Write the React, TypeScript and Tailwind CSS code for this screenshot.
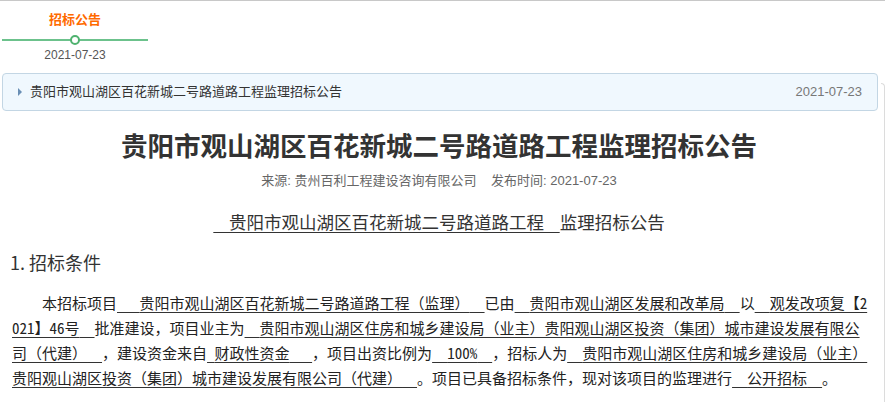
import type { ReactNode } from 'react';

const sp = (n: number) => '\u00a0'.repeat(n);

function U({ children }: { children: ReactNode }) {
  return <span className="underline decoration-[#333] underline-offset-[3px]">{children}</span>;
}

export default function App() {
  return (
    <div className="w-[885px] h-[402px] overflow-hidden bg-white border-t border-[#c8c8c8] font-['Liberation_Sans','Noto_Sans_CJK_SC',sans-serif] text-[#333]">
      {/* timeline */}
      <div className="w-[146px] ml-[2px] flex flex-col items-center">
        <div className="mt-[10px] text-[13px] font-bold leading-[18px] text-[#ff6a00]">招标公告</div>
        <div className="relative w-full h-[10px] mt-[6px] flex items-center">
          <div className="w-full h-[2px] bg-[#6cc28c]" />
          <div className="absolute left-[68px] top-0 w-[10px] h-[10px] rounded-full border-2 border-[#4fb26f] bg-white" />
        </div>
        <div className="mt-[2px] text-[12px] leading-[16px] text-[#555]">2021-07-23</div>
      </div>

      <div className="flex">
        <div className="w-[878px] flex flex-col">
          {/* list item */}
          <div className="mt-[10px] ml-[2px] w-[876px] h-[38px] flex items-center justify-between rounded-[4px] border border-[#c3d6e4] bg-[#f0f8fe] px-[15px]">
            <div className="flex items-center gap-[8px]">
              <span className="w-0 h-0 border-y-[4px] border-y-transparent border-l-[4px] border-l-[#6a8fb5]" />
              <span className="text-[13px] text-[#333]">贵阳市观山湖区百花新城二号路道路工程监理招标公告</span>
            </div>
            <span className="text-[13px] text-[#777]">2021-07-23</span>
          </div>

          {/* article */}
          <h1 className="mt-[19px] text-center text-[26.5px] leading-[34px] font-bold text-[#333]">
            贵阳市观山湖区百花新城二号路道路工程监理招标公告
          </h1>
          <div className="mt-[8px] text-center text-[13px] leading-[18px] text-[#666]">
            来源: 贵州百利工程建设咨询有限公司{sp(4)}发布时间: 2021-07-23
          </div>
          <div className="mt-[19px] text-center text-[17.5px] leading-[26px] text-[#333] font-['Noto_Sans_CJK_SC',sans-serif]">
            <U>{sp(4)}贵阳市观山湖区百花新城二号路道路工程{sp(4)}</U>监理招标公告
          </div>
          <div className="mt-[14px] pl-[10px] text-[18px] leading-[26px] text-[#333] font-['Noto_Sans_CJK_SC',sans-serif]">1. 招标条件</div>
          <p className="mt-[15px] pl-[12px] pr-[8px] indent-[30px] break-all text-[15px] leading-[25px] text-[#222] font-['Noto_Sans_Mono_CJK_SC','Noto_Sans_CJK_SC',monospace]">
            本招标项目<U>{sp(3)}贵阳市观山湖区百花新城二号路道路工程（监理）{sp(2)}</U>已由
            <U>{sp(2)}贵阳市观山湖区发展和改革局{sp(2)}</U>以<U>{sp(2)}观发改项复【2021】46号{sp(2)}</U>批准建设，项目业主为
            <U>{sp(2)}贵阳市观山湖区住房和城乡建设局（业主）贵阳观山湖区投资（集团）城市建设发展有限公司（代建）{sp(2)}</U>
            ，建设资金来自<U>{sp(1)}财政性资金{sp(3)}</U>，项目出资比例为<U>{sp(2)}100%{sp(2)}</U>，招标人为
            <U>{sp(2)}贵阳市观山湖区住房和城乡建设局（业主）贵阳观山湖区投资（集团）城市建设发展有限公司（代建）{sp(2)}</U>
            。项目已具备招标条件，现对该项目的监理进行<U>{sp(2)}公开招标{sp(2)}</U>。
          </p>
        </div>
        <div className="flex-1 flex justify-end">
          <div className="mt-[20px] w-[4px] h-[400px] border-t border-r border-[#dcdcdc] rounded-tr-[4px]" />
        </div>
      </div>
    </div>
  );
}
